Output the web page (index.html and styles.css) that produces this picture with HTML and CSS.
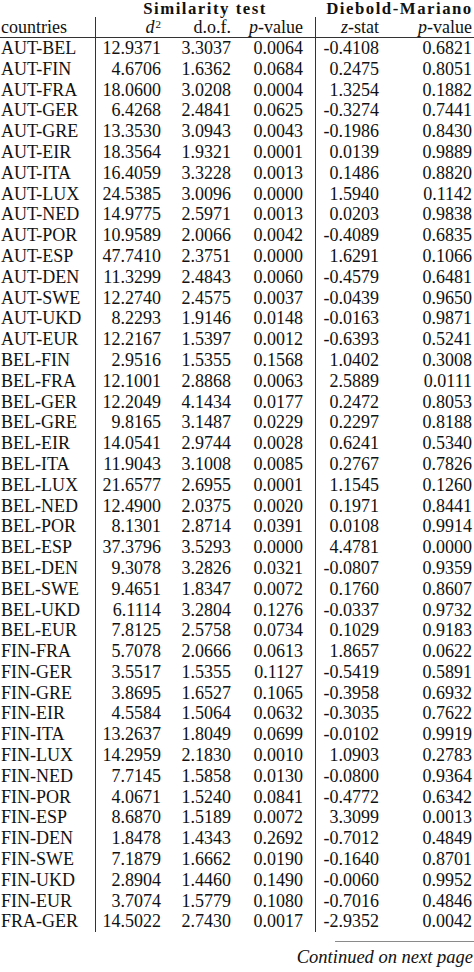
FILE: index.html
```html
<!DOCTYPE html>
<html>
<head>
<meta charset="utf-8">
<link rel="stylesheet" href="styles.css">
</head>
<body>
<div class="page">
  <div class="table">
    <div class="row group">
      <div class="name"></div>
      <div class="grp grp-sim">Similarity test</div>
      <div class="grp grp-dm">Diebold-Mariano</div>
    </div>
    <div class="row head">
      <div class="name">countries</div>
      <div class="d2"><i>d</i><sup>2</sup></div>
      <div class="dof">d.o.f.</div>
      <div class="pv"><i>p</i>-value</div>
      <div class="zs"><i>z</i>-stat</div>
      <div class="pv2"><i>p</i>-value</div>
    </div>
    <div class="row"><div class="name">AUT-BEL</div><div class="d2">12.9371</div><div class="dof">3.3037</div><div class="pv">0.0064</div><div class="zs">-0.4108</div><div class="pv2">0.6821</div></div>
    <div class="row"><div class="name">AUT-FIN</div><div class="d2">4.6706</div><div class="dof">1.6362</div><div class="pv">0.0684</div><div class="zs">0.2475</div><div class="pv2">0.8051</div></div>
    <div class="row"><div class="name">AUT-FRA</div><div class="d2">18.0600</div><div class="dof">3.0208</div><div class="pv">0.0004</div><div class="zs">1.3254</div><div class="pv2">0.1882</div></div>
    <div class="row"><div class="name">AUT-GER</div><div class="d2">6.4268</div><div class="dof">2.4841</div><div class="pv">0.0625</div><div class="zs">-0.3274</div><div class="pv2">0.7441</div></div>
    <div class="row"><div class="name">AUT-GRE</div><div class="d2">13.3530</div><div class="dof">3.0943</div><div class="pv">0.0043</div><div class="zs">-0.1986</div><div class="pv2">0.8430</div></div>
    <div class="row"><div class="name">AUT-EIR</div><div class="d2">18.3564</div><div class="dof">1.9321</div><div class="pv">0.0001</div><div class="zs">0.0139</div><div class="pv2">0.9889</div></div>
    <div class="row"><div class="name">AUT-ITA</div><div class="d2">16.4059</div><div class="dof">3.3228</div><div class="pv">0.0013</div><div class="zs">0.1486</div><div class="pv2">0.8820</div></div>
    <div class="row"><div class="name">AUT-LUX</div><div class="d2">24.5385</div><div class="dof">3.0096</div><div class="pv">0.0000</div><div class="zs">1.5940</div><div class="pv2">0.1142</div></div>
    <div class="row"><div class="name">AUT-NED</div><div class="d2">14.9775</div><div class="dof">2.5971</div><div class="pv">0.0013</div><div class="zs">0.0203</div><div class="pv2">0.9838</div></div>
    <div class="row"><div class="name">AUT-POR</div><div class="d2">10.9589</div><div class="dof">2.0066</div><div class="pv">0.0042</div><div class="zs">-0.4089</div><div class="pv2">0.6835</div></div>
    <div class="row"><div class="name">AUT-ESP</div><div class="d2">47.7410</div><div class="dof">2.3751</div><div class="pv">0.0000</div><div class="zs">1.6291</div><div class="pv2">0.1066</div></div>
    <div class="row"><div class="name">AUT-DEN</div><div class="d2">11.3299</div><div class="dof">2.4843</div><div class="pv">0.0060</div><div class="zs">-0.4579</div><div class="pv2">0.6481</div></div>
    <div class="row"><div class="name">AUT-SWE</div><div class="d2">12.2740</div><div class="dof">2.4575</div><div class="pv">0.0037</div><div class="zs">-0.0439</div><div class="pv2">0.9650</div></div>
    <div class="row"><div class="name">AUT-UKD</div><div class="d2">8.2293</div><div class="dof">1.9146</div><div class="pv">0.0148</div><div class="zs">-0.0163</div><div class="pv2">0.9871</div></div>
    <div class="row"><div class="name">AUT-EUR</div><div class="d2">12.2167</div><div class="dof">1.5397</div><div class="pv">0.0012</div><div class="zs">-0.6393</div><div class="pv2">0.5241</div></div>
    <div class="row"><div class="name">BEL-FIN</div><div class="d2">2.9516</div><div class="dof">1.5355</div><div class="pv">0.1568</div><div class="zs">1.0402</div><div class="pv2">0.3008</div></div>
    <div class="row"><div class="name">BEL-FRA</div><div class="d2">12.1001</div><div class="dof">2.8868</div><div class="pv">0.0063</div><div class="zs">2.5889</div><div class="pv2">0.0111</div></div>
    <div class="row"><div class="name">BEL-GER</div><div class="d2">12.2049</div><div class="dof">4.1434</div><div class="pv">0.0177</div><div class="zs">0.2472</div><div class="pv2">0.8053</div></div>
    <div class="row"><div class="name">BEL-GRE</div><div class="d2">9.8165</div><div class="dof">3.1487</div><div class="pv">0.0229</div><div class="zs">0.2297</div><div class="pv2">0.8188</div></div>
    <div class="row"><div class="name">BEL-EIR</div><div class="d2">14.0541</div><div class="dof">2.9744</div><div class="pv">0.0028</div><div class="zs">0.6241</div><div class="pv2">0.5340</div></div>
    <div class="row"><div class="name">BEL-ITA</div><div class="d2">11.9043</div><div class="dof">3.1008</div><div class="pv">0.0085</div><div class="zs">0.2767</div><div class="pv2">0.7826</div></div>
    <div class="row"><div class="name">BEL-LUX</div><div class="d2">21.6577</div><div class="dof">2.6955</div><div class="pv">0.0001</div><div class="zs">1.1545</div><div class="pv2">0.1260</div></div>
    <div class="row"><div class="name">BEL-NED</div><div class="d2">12.4900</div><div class="dof">2.0375</div><div class="pv">0.0020</div><div class="zs">0.1971</div><div class="pv2">0.8441</div></div>
    <div class="row"><div class="name">BEL-POR</div><div class="d2">8.1301</div><div class="dof">2.8714</div><div class="pv">0.0391</div><div class="zs">0.0108</div><div class="pv2">0.9914</div></div>
    <div class="row"><div class="name">BEL-ESP</div><div class="d2">37.3796</div><div class="dof">3.5293</div><div class="pv">0.0000</div><div class="zs">4.4781</div><div class="pv2">0.0000</div></div>
    <div class="row"><div class="name">BEL-DEN</div><div class="d2">9.3078</div><div class="dof">3.2826</div><div class="pv">0.0321</div><div class="zs">-0.0807</div><div class="pv2">0.9359</div></div>
    <div class="row"><div class="name">BEL-SWE</div><div class="d2">9.4651</div><div class="dof">1.8347</div><div class="pv">0.0072</div><div class="zs">0.1760</div><div class="pv2">0.8607</div></div>
    <div class="row"><div class="name">BEL-UKD</div><div class="d2">6.1114</div><div class="dof">3.2804</div><div class="pv">0.1276</div><div class="zs">-0.0337</div><div class="pv2">0.9732</div></div>
    <div class="row"><div class="name">BEL-EUR</div><div class="d2">7.8125</div><div class="dof">2.5758</div><div class="pv">0.0734</div><div class="zs">0.1029</div><div class="pv2">0.9183</div></div>
    <div class="row"><div class="name">FIN-FRA</div><div class="d2">5.7078</div><div class="dof">2.0666</div><div class="pv">0.0613</div><div class="zs">1.8657</div><div class="pv2">0.0622</div></div>
    <div class="row"><div class="name">FIN-GER</div><div class="d2">3.5517</div><div class="dof">1.5355</div><div class="pv">0.1127</div><div class="zs">-0.5419</div><div class="pv2">0.5891</div></div>
    <div class="row"><div class="name">FIN-GRE</div><div class="d2">3.8695</div><div class="dof">1.6527</div><div class="pv">0.1065</div><div class="zs">-0.3958</div><div class="pv2">0.6932</div></div>
    <div class="row"><div class="name">FIN-EIR</div><div class="d2">4.5584</div><div class="dof">1.5064</div><div class="pv">0.0632</div><div class="zs">-0.3035</div><div class="pv2">0.7622</div></div>
    <div class="row"><div class="name">FIN-ITA</div><div class="d2">13.2637</div><div class="dof">1.8049</div><div class="pv">0.0699</div><div class="zs">-0.0102</div><div class="pv2">0.9919</div></div>
    <div class="row"><div class="name">FIN-LUX</div><div class="d2">14.2959</div><div class="dof">2.1830</div><div class="pv">0.0010</div><div class="zs">1.0903</div><div class="pv2">0.2783</div></div>
    <div class="row"><div class="name">FIN-NED</div><div class="d2">7.7145</div><div class="dof">1.5858</div><div class="pv">0.0130</div><div class="zs">-0.0800</div><div class="pv2">0.9364</div></div>
    <div class="row"><div class="name">FIN-POR</div><div class="d2">4.0671</div><div class="dof">1.5240</div><div class="pv">0.0841</div><div class="zs">-0.4772</div><div class="pv2">0.6342</div></div>
    <div class="row"><div class="name">FIN-ESP</div><div class="d2">8.6870</div><div class="dof">1.5189</div><div class="pv">0.0072</div><div class="zs">3.3099</div><div class="pv2">0.0013</div></div>
    <div class="row"><div class="name">FIN-DEN</div><div class="d2">1.8478</div><div class="dof">1.4343</div><div class="pv">0.2692</div><div class="zs">-0.7012</div><div class="pv2">0.4849</div></div>
    <div class="row"><div class="name">FIN-SWE</div><div class="d2">7.1879</div><div class="dof">1.6662</div><div class="pv">0.0190</div><div class="zs">-0.1640</div><div class="pv2">0.8701</div></div>
    <div class="row"><div class="name">FIN-UKD</div><div class="d2">2.8904</div><div class="dof">1.4460</div><div class="pv">0.1490</div><div class="zs">-0.0060</div><div class="pv2">0.9952</div></div>
    <div class="row"><div class="name">FIN-EUR</div><div class="d2">3.7074</div><div class="dof">1.5779</div><div class="pv">0.1080</div><div class="zs">-0.7016</div><div class="pv2">0.4846</div></div>
    <div class="row"><div class="name">FRA-GER</div><div class="d2">14.5022</div><div class="dof">2.7430</div><div class="pv">0.0017</div><div class="zs">-2.9352</div><div class="pv2">0.0042</div></div>
  </div>
  <div class="foot">
    <div class="foot-rule"></div>
    <div class="foot-text">Continued on next page</div>
  </div>
</div>
</body>
</html>
```
FILE: styles.css
```css
html, body {
  margin: 0;
  padding: 0;
  background: #ffffff;
  overflow: hidden;
}

body {
  font-family: "Liberation Serif", "Times New Roman", serif;
  font-size: 18px;
  color: #111111;
}

.page {
  width: 474px;
  height: 972px;
  overflow: hidden;
}

.table {
  width: 484px;
}

.row {
  display: grid;
  grid-template-columns: 95px 71px 70px 79px 79px 90px;
  height: 20.81px;
  line-height: 20.81px;
  box-sizing: border-box;
}

.row > div {
  box-sizing: border-box;
  text-align: right;
  white-space: nowrap;
}

.row > .name {
  text-align: left;
  padding-left: 1px;
}

.d2 {
  padding-right: 5px;
  border-left: 1px solid #333333;
}

.dof {
  padding-right: 5px;
}

.pv {
  padding-right: 12px;
}

.zs {
  padding-right: 15px;
  border-left: 1px solid #333333;
}

.pv2 {
  padding-right: 12px;
}

.row.group {
  height: 17.2px;
  line-height: 18.6px;
}

.row.group > .grp {
  text-align: center;
  font-weight: bold;
  font-size: 16.8px;
  letter-spacing: 1.5px;
}

.grp-sim {
  grid-column: 2 / span 3;
}

.grp-dm {
  grid-column: 5 / span 2;
}

.row.head {
  border-bottom: 1px solid #333333;
}

.row.head sup {
  font-size: 11px;
  line-height: 0;
  vertical-align: 5px;
  margin-left: 1px;
}

.foot {
  padding-top: 9px;
}

.foot-rule {
  margin-left: 335px;
  height: 1px;
  background: #8a8a8a;
}

.foot-text {
  margin-top: 5px;
  text-align: right;
  padding-right: 1px;
  font-style: italic;
  font-size: 18.5px;
  line-height: 20.8px;
}
```
